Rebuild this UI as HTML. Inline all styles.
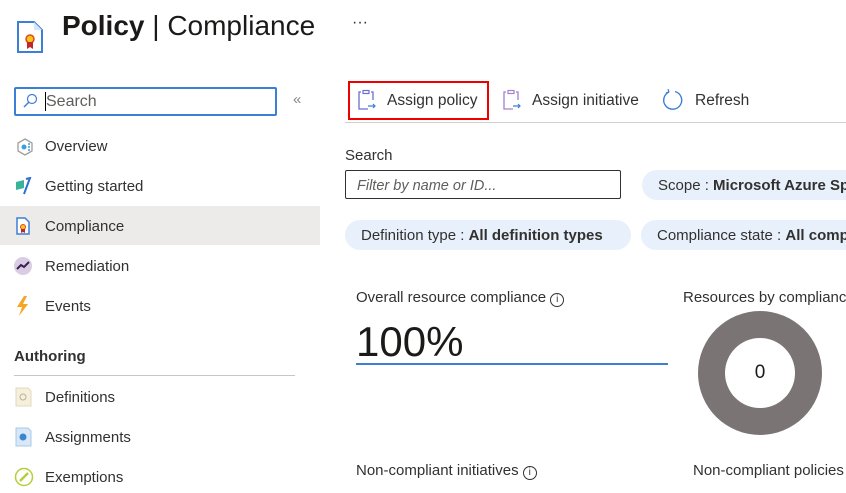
<!DOCTYPE html>
<html><head><style>
body{margin:0;width:846px;height:493px;overflow:hidden;background:#fff;font-family:"Liberation Sans",sans-serif;color:#323130;position:relative}
.a{position:absolute;white-space:nowrap}
.nav{font-size:15px;left:45px}
.pill{position:absolute;box-sizing:border-box;background:#e8f1fb;border-radius:15px;font-size:15px;line-height:30px;height:30px;padding-left:16px;white-space:nowrap;overflow:hidden}
#wrap{position:absolute;left:0;top:0;width:846px;height:493px;overflow:hidden}
</style></head><body><div id="wrap">
<svg class="a" style="left:16px;top:20px" width="30" height="34" viewBox="0 0 30 34"><path d="M2 2h16l8 8v22H2z" fill="#fff" stroke="#3c7fd6" stroke-width="2"/><path d="M18 2v8h8" fill="#d6e6f7"/><circle cx="14" cy="19" r="4" fill="#f5c518" stroke="#e0491f" stroke-width="1.5"/><path d="M11 22v7l3-2 3 2v-7" fill="#c0272d"/></svg>
<div class="a" style="left:62px;top:10px;font-size:28px;color:#1b1a19"><b>Policy</b> | Compliance</div>
<div class="a" style="left:352px;top:14px;font-size:16px">···</div>

<div class="a" style="left:14px;top:87px;width:259px;height:25px;border:2px solid #3c7fd6;border-radius:2px"></div>
<svg class="a" style="left:22px;top:93px" width="16" height="16"><circle cx="10" cy="6" r="4.5" fill="none" stroke="#3c7fd6" stroke-width="1.2"/><path d="M7 9L2 14" stroke="#3c7fd6" stroke-width="1.4"/></svg>
<div class="a" style="left:45px;top:92px;width:1px;height:19px;background:#000"></div>
<div class="a" style="left:46px;top:93px;font-size:16px;color:#605e5c">Search</div>
<div class="a" style="left:293px;top:91px;font-size:15px;color:#8a8886">«</div>

<div class="a" style="left:0;top:206px;width:320px;height:39px;background:#edebe9"></div>
<svg class="a" style="left:16px;top:138px" width="18" height="18"><path d="M9 1l7 4v8l-7 4-7-4V5z" fill="none" stroke="#a19f9d" stroke-width="1.3"/><circle cx="8" cy="9" r="2.5" fill="#3c9fe0"/><circle cx="13" cy="6" r="1" fill="#3c9fe0"/><circle cx="13" cy="9" r="1" fill="#3c9fe0"/><circle cx="13" cy="12" r="1" fill="#3c9fe0"/></svg>
<div class="a nav" style="top:138px">Overview</div>
<svg class="a" style="left:15px;top:177px" width="18" height="18"><path d="M1 5l8-2 0 8-8 2z" fill="#3bb39a"/><path d="M11 2l4-1-6 16" stroke="#2c6fd3" stroke-width="2" fill="none"/></svg>
<div class="a nav" style="top:178px">Getting started</div>
<svg class="a" style="left:16px;top:217px" width="14" height="18"><path d="M1 1h8l4 4v12H1z" fill="#fff" stroke="#3c7fd6" stroke-width="1.5"/><circle cx="7" cy="10" r="2.5" fill="#f5c518" stroke="#e0491f"/><path d="M5 12v4l2-1 2 1v-4" fill="#c0272d"/></svg>
<div class="a nav" style="top:218px">Compliance</div>
<svg class="a" style="left:14px;top:257px" width="18" height="18"><circle cx="9" cy="9" r="9" fill="#d9cde3"/><path d="M3 12l4-4 3 2 5-5" stroke="#3b1f4f" stroke-width="2" fill="none"/></svg>
<div class="a nav" style="top:258px">Remediation</div>
<svg class="a" style="left:16px;top:296px" width="14" height="20"><path d="M8 0L1 11h5l-3 9 9-12H7l4-8z" fill="#f5a623"/></svg>
<div class="a nav" style="top:298px">Events</div>
<div class="a" style="left:14px;top:348px;font-size:15px;font-weight:bold">Authoring</div>
<div class="a" style="left:14px;top:375px;width:281px;height:1px;background:#c8c6c4"></div>
<svg class="a" style="left:15px;top:387px" width="18" height="20"><path d="M1 1h12l3 3v15H1z" fill="#f6efd9" stroke="#e0d9c3"/><circle cx="8" cy="10" r="3" fill="none" stroke="#b8b1a0"/></svg>
<div class="a nav" style="top:389px">Definitions</div>
<svg class="a" style="left:15px;top:427px" width="18" height="20"><path d="M1 1h12l3 3v15H1z" fill="#d8e8f6" stroke="#a9c9e8"/><circle cx="8" cy="10" r="3.5" fill="#3b86d0"/></svg>
<div class="a nav" style="top:429px">Assignments</div>
<svg class="a" style="left:14px;top:467px" width="20" height="20"><circle cx="10" cy="10" r="8.5" fill="none" stroke="#b5cf3a" stroke-width="1.5"/><path d="M6 14l8-8" stroke="#b5cf3a" stroke-width="2.5"/></svg>
<div class="a nav" style="top:469px">Exemptions</div>

<div class="a" style="left:348px;top:81px;width:137px;height:35px;border:2px solid #e00"></div>
<svg class="a" style="left:357px;top:89px" width="20" height="22"><path d="M4 3H2v17h9M14 3h2v8" fill="none" stroke="#6b6fd0" stroke-width="1.3"/><rect x="6" y="1.5" width="6" height="3" fill="none" stroke="#6b6fd0" stroke-width="1.2"/><path d="M11 17h7m-2-2l2 2-2 2" fill="none" stroke="#3c7fd6" stroke-width="1.2"/></svg>
<div class="a" style="left:387px;top:92px;font-size:15.5px">Assign policy</div>
<svg class="a" style="left:502px;top:89px" width="20" height="22"><path d="M4 3H2v17h9M14 3h2v8" fill="none" stroke="#a67fd0" stroke-width="1.3"/><rect x="6" y="1.5" width="6" height="3" fill="none" stroke="#a67fd0" stroke-width="1.2"/><path d="M11 17h7m-2-2l2 2-2 2" fill="none" stroke="#3c7fd6" stroke-width="1.2"/></svg>
<div class="a" style="left:532px;top:92px;font-size:15.5px">Assign initiative</div>
<svg class="a" style="left:662px;top:89px" width="22" height="22"><path d="M7 3A9 9 0 1 0 13 2.5" fill="none" stroke="#3c7fd6" stroke-width="1.4"/><path d="M7 3l-1-3M7 3l-3 1" stroke="#3c7fd6" stroke-width="1.2"/></svg>
<div class="a" style="left:695px;top:92px;font-size:15.5px">Refresh</div>
<div class="a" style="left:345px;top:122px;width:501px;height:1px;background:#d2d0ce"></div>

<div class="a" style="left:345px;top:147px;font-size:15px">Search</div>
<div class="a" style="left:345px;top:170px;width:274px;height:27px;border:1px solid #323130;border-radius:2px"></div>
<div class="a" style="left:357px;top:178px;font-size:14.5px;font-style:italic;color:#605e5c">Filter by name or ID...</div>
<div class="pill" style="left:642px;top:170px;width:204px;border-radius:15px 0 0 15px;line-height:31px">Scope : <b>Microsoft Azure Sponsorship</b></div>
<div class="pill" style="left:345px;top:220px;width:286px;line-height:31px">Definition type : <b>All definition types</b></div>
<div class="pill" style="left:641px;top:220px;width:205px;border-radius:15px 0 0 15px;line-height:31px">Compliance state : <b>All compliance states</b></div>

<div class="a" style="left:356px;top:289px;font-size:15px">Overall resource compliance <span style="display:inline-block;width:12px;height:12px;border:1px solid #323130;border-radius:50%;font-size:10px;line-height:12px;text-align:center">i</span></div>
<div class="a" style="left:356px;top:318px;font-size:42px;color:#1b1a19">100%</div>
<div class="a" style="left:356px;top:363px;width:312px;height:2px;background:#3c7fd6"></div>
<div class="a" style="left:683px;top:289px;font-size:15px">Resources by compliance state</div>
<div class="a" style="left:698px;top:311px;width:124px;height:124px;border-radius:50%;background:#7a7574"></div>
<div class="a" style="left:725px;top:338px;width:70px;height:70px;border-radius:50%;background:#fff;text-align:center;line-height:70px;font-size:19px;color:#1b1a19">0</div>
<div class="a" style="left:356px;top:462px;font-size:15px">Non-compliant initiatives <span style="display:inline-block;width:12px;height:12px;border:1px solid #323130;border-radius:50%;font-size:10px;line-height:12px;text-align:center">i</span></div>
<div class="a" style="left:693px;top:462px;font-size:15px">Non-compliant policies</div>
</div></body></html>
